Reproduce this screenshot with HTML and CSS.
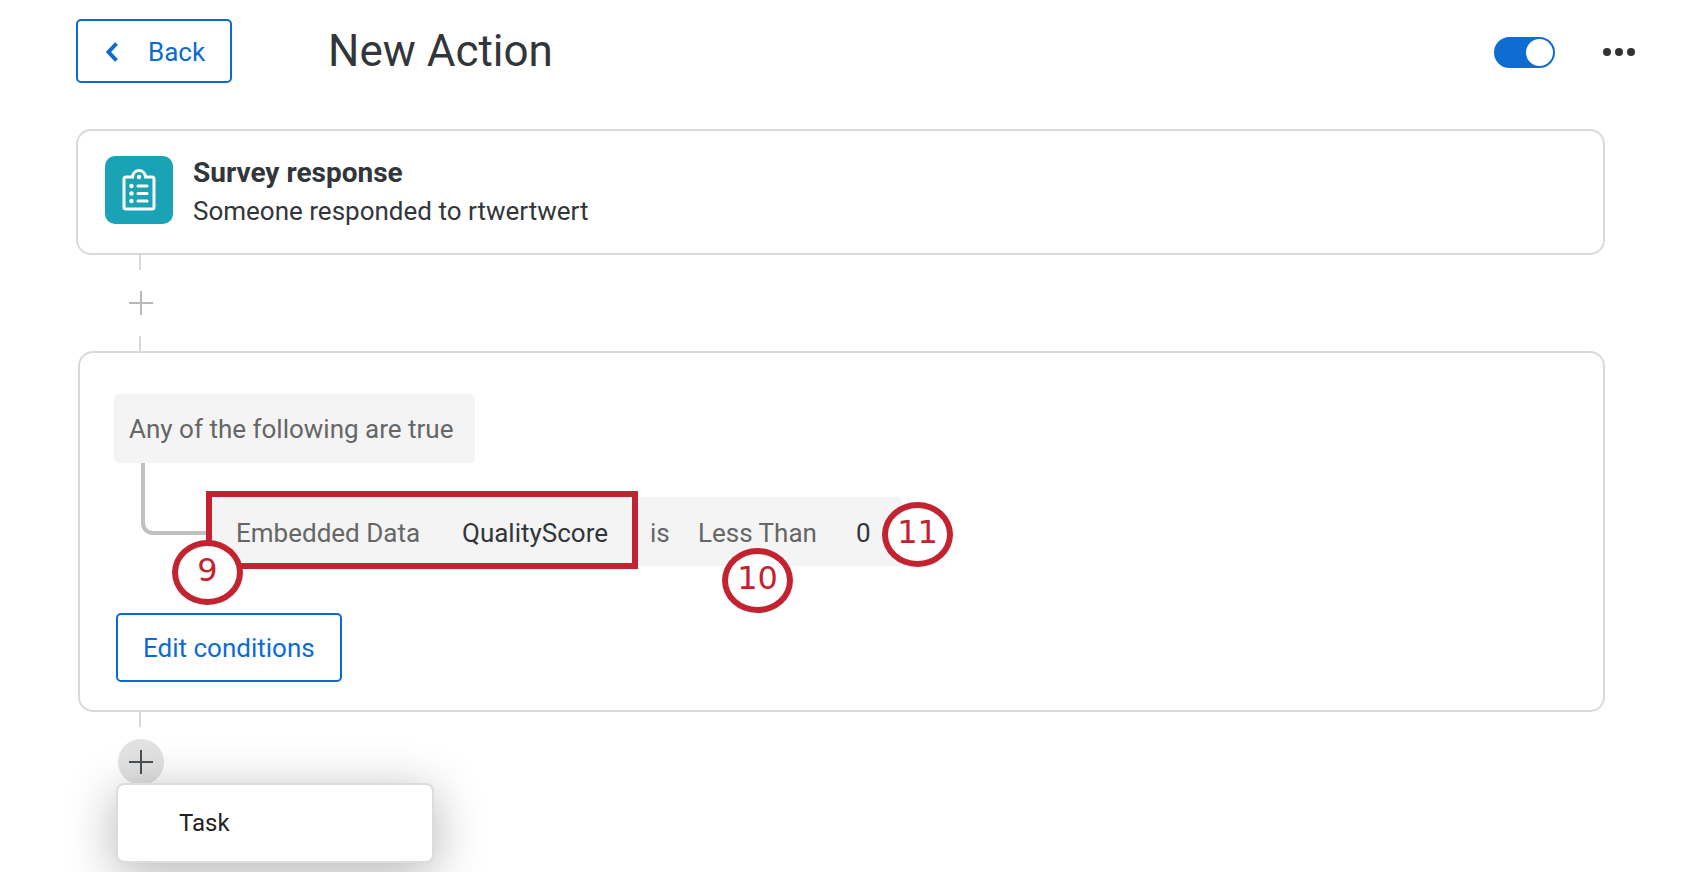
FILE: index.html
```html
<!DOCTYPE html>
<html lang="en">
<head>
<meta charset="utf-8">
<title>New Action</title>
<link rel="stylesheet" href="styles.css">
</head>
<body>
<header class="header">
  <button class="btn back" type="button">
    <svg class="chevron" viewBox="0 0 12 20" aria-hidden="true"><path d="M10.500 1.500 2.500 10l8 8.500"/></svg>
    Back
  </button>
  <h1 class="title">New Action</h1>
  <input class="toggle" type="checkbox" role="switch" aria-label="Action enabled" checked>
  <button class="more" type="button" aria-label="More options">
    <svg viewBox="0 0 32 8" aria-hidden="true"><circle cx="4" cy="4" r="4"/><circle cx="16" cy="4" r="4"/><circle cx="28" cy="4" r="4"/></svg>
  </button>
</header>
<main class="flow">
  <section class="card event">
    <span class="event-icon">
      <svg viewBox="0 0 34 42" aria-hidden="true">
        <path class="outline" d="M4 8h6.500c.4-4 3-6.500 6.500-6.500s6.100 2.500 6.500 6.500H30q2 0 2 2v28q0 2-2 2H4q-2 0-2-2V10q0-2 2-2z"/>
        <g class="dots"><circle cx="17" cy="8" r="2.200"/><circle cx="9.500" cy="17" r="2.200"/><circle cx="9.500" cy="24.500" r="2.200"/><circle cx="9.500" cy="32" r="2.200"/></g>
        <path class="outline" d="M16 17h9M16 24.500h9M16 32h9"/>
      </svg>
    </span>
    <div>
      <h2 class="event-name">Survey response</h2>
      <p class="event-text">Someone responded to rtwertwert</p>
    </div>
  </section>
  <div class="link">
    <button class="add" type="button" aria-label="Add step"><svg viewBox="0 0 24 24" aria-hidden="true"><path d="M12 0v24M0 12h24"/></svg></button>
  </div>
  <section class="card conditions">
    <div class="chip">Any of the following are true</div>
    <div class="branch">
      <span class="elbow"></span>
      <div class="rule">
        <span class="source marked"><span class="field">Embedded Data</span><span class="value">QualityScore</span><b class="badge badge-source">9</b></span>
        <span class="is">is</span>
        <span class="operator">Less Than<b class="badge badge-operator">10</b></span>
        <span class="value">0</span>
        <b class="badge badge-value">11</b>
      </div>
    </div>
    <button class="btn edit" type="button">Edit conditions</button>
  </section>
  <div class="link last">
    <button class="add active" type="button" aria-label="Add step" aria-expanded="true"><svg viewBox="0 0 24 24" aria-hidden="true"><path d="M12 0v24M0 12h24"/></svg></button>
    <div class="menu" role="menu"><button class="menu-item" type="button" role="menuitem">Task</button></div>
  </div>
</main>
</body>
</html>
```
FILE: styles.css
```css
* { box-sizing: border-box; }
body {
  min-height: 100vh;
  margin: 0;
  background: #fff;
  color: #32363a;
  font: 26px/38px Roboto, "Liberation Sans", sans-serif;
}
button { font: inherit; cursor: pointer; }
h1, h2, p { margin: 0; font-weight: 400; }

.header {
  display: flex;
  align-items: center;
  padding: 19px 63px 46px 76px;
}
.btn {
  border: 2px solid #0b6bd3;
  border-radius: 5px;
  background: #fff;
  color: #0b6bd3;
}
.back {
  display: flex;
  align-items: center;
  gap: 30px;
  width: 156px;
  height: 64px;
  padding: 2px 0 0 28px;
}
.chevron {
  width: 12px;
  height: 20px;
  fill: none;
  stroke: #0b6bd3;
  stroke-width: 4;
}
.title {
  flex: 1;
  padding-left: 96px;
  font-size: 44px;
  line-height: 64px;
}
.toggle {
  appearance: none;
  display: flex;
  justify-content: flex-end;
  width: 61px;
  height: 31px;
  margin: 2px 46px 0 0;
  padding: 2px;
  border-radius: 16px;
  background: #0f6dd2;
}
.toggle::before {
  content: "";
  width: 27px;
  height: 27px;
  border-radius: 50%;
  background: #fff;
}
.more {
  display: flex;
  padding: 6px 2px 4px;
  border: 0;
  background: none;
}
.more svg { width: 32px; height: 8px; fill: #333; }

.flow { padding: 0 95px 0 76px; }
.card {
  border: 2px solid #d9d9d9;
  border-radius: 15px;
}
.event {
  display: flex;
  gap: 20px;
  padding: 23px 27px;
}
.event-icon {
  display: grid;
  place-items: center;
  width: 68px;
  height: 68px;
  margin-top: 2px;
  border-radius: 10px;
  background: #19a3b5;
}
.event-icon svg { width: 34px; height: 42px; }
.outline {
  fill: none;
  stroke: #fff;
  stroke-width: 3;
  stroke-linecap: round;
}
.dots { fill: #fff; }
.event-name { font-size: 28px; line-height: 38px; font-weight: 700; }

.link {
  position: relative;
  display: flex;
  flex-direction: column;
  align-items: center;
  justify-content: space-between;
  width: 46px;
  height: 96px;
  margin-left: 42px;
}
.link::before, .link:not(.last)::after {
  content: "";
  width: 2px;
  height: 15px;
  margin-right: 2px;
  background: #d9d9d9;
}
.add {
  display: grid;
  place-items: center;
  width: 46px;
  height: 46px;
  padding: 0;
  border: 0;
  border-radius: 50%;
  background: none;
}
.add svg {
  width: 24px;
  height: 24px;
  fill: none;
  stroke: #b8b8b8;
  stroke-width: 2;
}
.active { background: #e2e2e2; }
.active svg { stroke: #4b5056; }
.last { height: 73px; }

.conditions {
  margin-left: 2px;
  padding: 41px 34px 28px;
}
.chip {
  width: fit-content;
  min-width: 361px;
  padding: 16px 15px 15px;
  border-radius: 5px;
  background: #f4f4f4;
  color: #666;
}
.branch { display: flex; padding-left: 27px; }
.elbow {
  width: 65px;
  height: 72px;
  border: solid #c0c0c0;
  border-width: 0 0 4px 4px;
  border-bottom-left-radius: 12px;
}
.rule {
  position: relative;
  display: flex;
  width: 696px;
  margin-top: 34px;
  padding: 17px 0 14px 30px;
  border-radius: 5px;
  background: #f4f4f4;
  color: #666;
}
.value { color: #32363a; }
.source {
  position: relative;
  display: flex;
  gap: 36px;
  width: 414px;
}
.field { width: 190px; }
.marked::before {
  content: "";
  position: absolute;
  inset: -23px 12px -17px -30px;
  border: 6px solid #c32331;
}
.is { width: 48px; }
.operator { position: relative; width: 158px; }
.badge {
  position: absolute;
  width: 71px;
  height: 65px;
  border: 6px solid #c32331;
  border-radius: 50%;
  background: #fff;
  color: #c32331;
  font: 32px/48px "DejaVu Sans", sans-serif;
  text-align: center;
}
.badge-source { left: -64px; top: 26px; }
.badge-operator { left: 24px; top: 34px; }
.badge-value { right: -51px; top: 5px; }
.edit {
  margin: 47px 0 0 2px;
  padding: 14px 25px 13px;
}

.menu {
  position: absolute;
  top: 100%;
  left: -2px;
  width: 318px;
  margin-top: -2px;
  border: 2px solid #dcdcdc;
  border-radius: 8px;
  background: #fff;
  box-shadow: 0 10px 50px rgba(0, 0, 0, 0.3);
}
.menu-item {
  width: 100%;
  padding: 19px 61px;
  border: 0;
  background: none;
  color: #222;
  font-size: 24px;
  text-align: left;
}
```
